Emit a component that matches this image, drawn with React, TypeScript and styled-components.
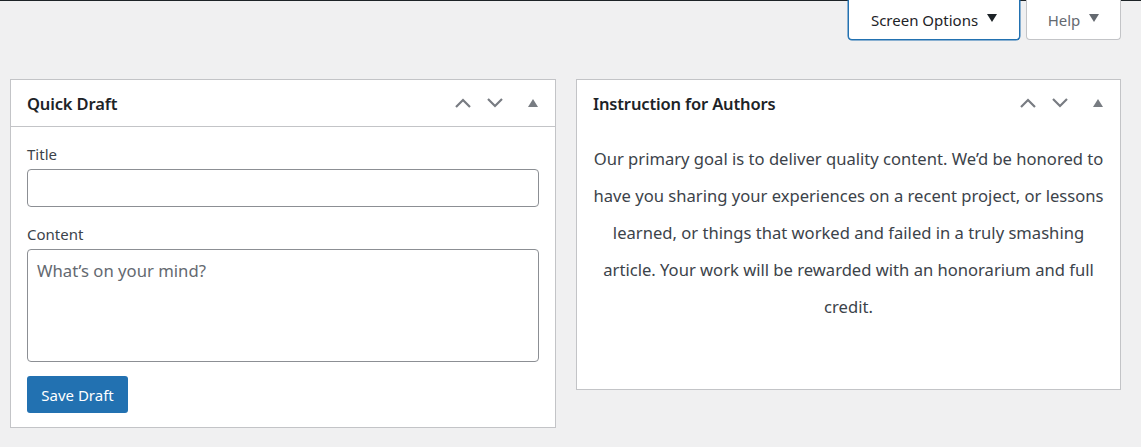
import React from "react";
import styled, { createGlobalStyle } from "styled-components";

const Global = createGlobalStyle`
  html, body { margin: 0; padding: 0; }
  body {
    background: #f0f0f1;
    font-family: "Noto Sans", "Open Sans", sans-serif;
    color: #1d2327;
  }
  * { box-sizing: border-box; }
`;

const Page = styled.div`
  border-top: 1px solid #1d2327;
  min-height: 447px;
`;

const MetaLinks = styled.div`
  display: flex;
  justify-content: flex-end;
  gap: 6px;
  padding-right: 20px;
`;

const MetaButton = styled.button<{ $active?: boolean; $w: number }>`
  width: ${(p) => p.$w}px;
  height: 40px;
  margin-top: -1px;
  background: #fff;
  border: 1px solid ${(p) => (p.$active ? "#2271b1" : "#c3c4c7")};
  border-top: none;
  border-radius: 0 0 4px 4px;
  box-shadow: ${(p) => (p.$active ? "0 0 0 0.5px #2271b1" : "none")};
  font-family: inherit;
  font-size: 15px;
  color: ${(p) => (p.$active ? "#1d2327" : "#646970")};
  display: flex;
  align-items: center;
  justify-content: center;
  gap: 9px;
  padding: 0;
  cursor: pointer;
`;

const Caret = styled.span<{ $c: string }>`
  width: 0;
  height: 0;
  border-left: 5px solid transparent;
  border-right: 5px solid transparent;
  border-top: 8px solid ${(p) => p.$c};
  margin-top: -3px;
`;

const Columns = styled.div`
  display: grid;
  grid-template-columns: 546px 545px;
  gap: 20px;
  padding: 39px 20px 0 10px;
  align-items: start;
`;

const Box = styled.section<{ $h: number }>`
  background: #fff;
  border: 1px solid #c3c4c7;
  height: ${(p) => p.$h}px;
  display: flex;
  flex-direction: column;
`;

const Header = styled.div<{ $rule?: boolean }>`
  height: 47px;
  flex: none;
  display: flex;
  align-items: center;
  padding: 0 0 0 16px;
  border-bottom: 1px solid ${(p) => (p.$rule ? "#c3c4c7" : "transparent")};
`;

const BoxTitle = styled.h2`
  margin: 0;
  flex: 1;
  font-size: 16.5px;
  font-weight: 600;
  color: #1d2327;
  letter-spacing: -0.15px;
`;

const Handles = styled.div`
  display: flex;
  align-items: center;
  height: 100%;
`;

const HandleBtn = styled.button<{ $w: number }>`
  width: ${(p) => p.$w}px;
  height: 100%;
  background: none;
  border: none;
  padding: 0;
  display: flex;
  align-items: center;
  justify-content: center;
  color: #787c82;
`;

const FormBody = styled.div`
  padding: 17px 16px 16px 16px;
  display: flex;
  flex-direction: column;
`;

const Label = styled.label`
  font-size: 15px;
  color: #3c434a;
  line-height: 20px;
  margin-bottom: 5px;
`;

const TextInput = styled.input`
  height: 38px;
  border: 1px solid #8c8f94;
  border-radius: 4px;
  margin-bottom: 17px;
  font-family: inherit;
  font-size: 16px;
`;

const TextArea = styled.textarea`
  height: 113px;
  border: 1px solid #8c8f94;
  border-radius: 4px;
  padding: 9px 9px;
  font-family: inherit;
  font-size: 16.7px;
  color: #3c434a;
  resize: none;
  margin-bottom: 14px;
  &::placeholder { color: #646970; }
`;

const Primary = styled.button`
  align-self: flex-start;
  width: 101px;
  height: 37px;
  background: #2271b1;
  border: none;
  border-radius: 3px;
  color: #fff;
  font-family: inherit;
  font-size: 15px;
  padding: 0;
`;

const InfoText = styled.p`
  margin: 0;
  padding: 13px 10px 0;
  text-align: center;
  font-size: 16.6px;
  line-height: 37px;
  color: #3c434a;
`;

const Up = () => (
  <svg width="18" height="12" viewBox="0 0 18 12">
    <path d="M2 10 L9 3 L16 10" fill="none" stroke="currentColor" strokeWidth="2.2" />
  </svg>
);
const Down = () => (
  <svg width="18" height="12" viewBox="0 0 18 12">
    <path d="M2 2 L9 9 L16 2" fill="none" stroke="currentColor" strokeWidth="2.2" />
  </svg>
);
const Tri = () => (
  <svg width="10" height="8" viewBox="0 0 10 8">
    <path d="M0 8 L5 0 L10 8 Z" fill="currentColor" />
  </svg>
);

const BoxHandles = () => (
  <Handles>
    <HandleBtn $w={32}><Up /></HandleBtn>
    <HandleBtn $w={32}><Down /></HandleBtn>
    <HandleBtn $w={44}><Tri /></HandleBtn>
  </Handles>
);

export default function App() {
  return (
    <Page>
      <Global />
      <MetaLinks>
        <MetaButton $active $w={172}>
          Screen Options <Caret $c="#1d2327" />
        </MetaButton>
        <MetaButton $w={95}>
          Help <Caret $c="#646970" />
        </MetaButton>
      </MetaLinks>
      <Columns>
        <Box $h={349}>
          <Header $rule>
            <BoxTitle>Quick Draft</BoxTitle>
            <BoxHandles />
          </Header>
          <FormBody>
            <Label>Title</Label>
            <TextInput />
            <Label>Content</Label>
            <TextArea placeholder="What’s on your mind?" />
            <Primary>Save Draft</Primary>
          </FormBody>
        </Box>
        <Box $h={311}>
          <Header>
            <BoxTitle>Instruction for Authors</BoxTitle>
            <BoxHandles />
          </Header>
          <InfoText>
            Our primary goal is to deliver quality content. We’d be honored to have you sharing your
            experiences on a recent project, or lessons learned, or things that worked and failed in a
            truly smashing article. Your work will be rewarded with an honorarium and full credit.
          </InfoText>
        </Box>
      </Columns>
    </Page>
  );
}
